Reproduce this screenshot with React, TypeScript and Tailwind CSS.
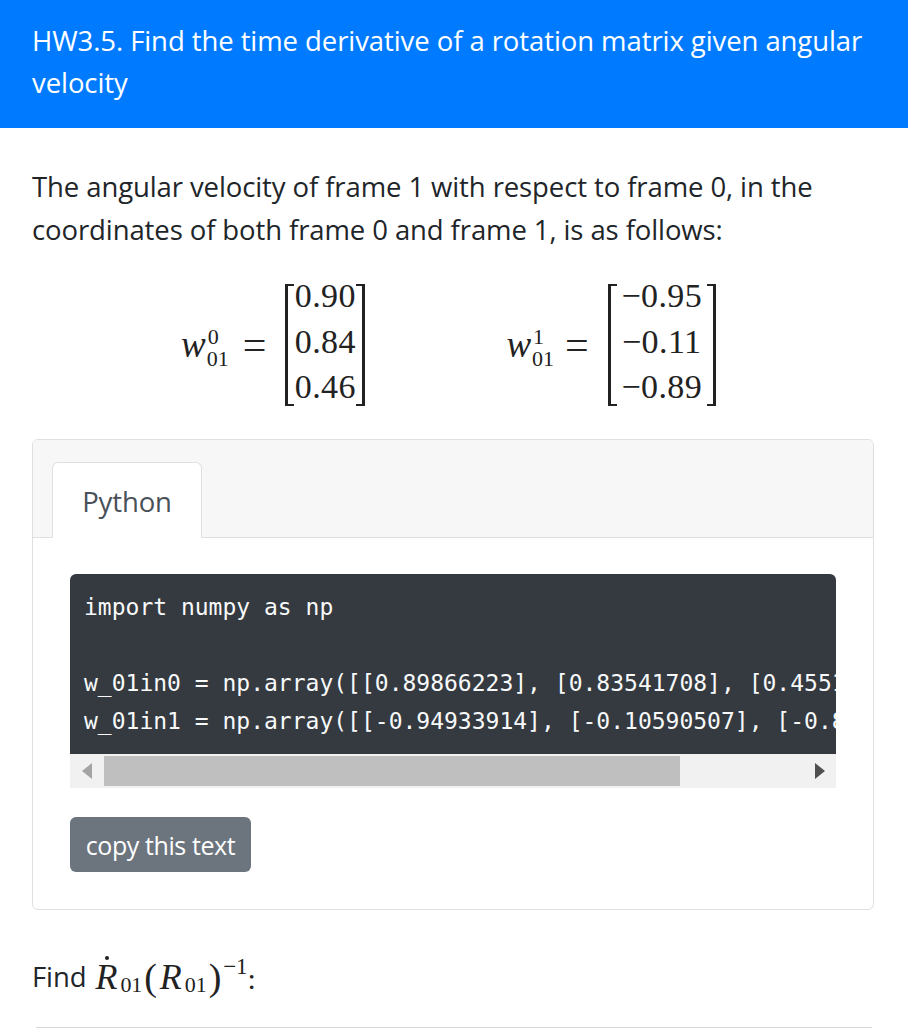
import React from "react";

const serif = "[font-family:'Liberation_Serif','Times_New_Roman',serif]";

function Matrix({ rows, width }: { rows: string[]; width: string }) {
  return (
    <div className={`relative flex flex-col h-[122px] items-center ${width} ${serif} text-[#222] text-[34px] leading-[46px] tracking-[0.4px]`}>
      <span className="absolute left-0 top-0 h-full w-[9px] border-l-[3px] border-y-2 border-[#222]" />
      <span className="absolute right-0 top-0 h-full w-[9px] border-r-[3px] border-y-2 border-[#222]" />
      <div className="flex flex-col mt-[-11px]">
        {rows.map((r) => (
          <span key={r} className="block h-[45.5px] text-center whitespace-nowrap">{r}</span>
        ))}
      </div>
    </div>
  );
}

function Lhs({ sup, gap }: { sup: string; gap: string }) {
  return (
    <div className={`flex items-center ${serif} text-[#222]`}>
      <span className="italic text-[37px] leading-none mt-[-2px] ml-[-1px]">w</span>
      <span className="flex flex-col items-start text-[22px] leading-[22px] ml-[1px] mt-[6px]">
        <span className="ml-[1px]">{sup}</span>
        <span>01</span>
      </span>
      <span className={`text-[42px] leading-none ${gap} mr-[19px]`}>=</span>
    </div>
  );
}

export default function App() {
  return (
    <div className="w-[908px] h-[1028px] overflow-hidden bg-white text-[#212529] font-['Open_Sans',sans-serif]">
      <header className="h-[128px] bg-[#007bff] text-white px-[32px] pt-[20px] text-[27.5px] leading-[42px] tracking-[-0.08px]">
        HW3.5. Find the time derivative of a rotation matrix given angular velocity
      </header>
      <main className="px-[32px] pt-[37px]">
        <p className="text-[27.5px] leading-[43px] tracking-[-0.1px] w-[800px]">
          The angular velocity of frame 1 with respect to frame 0, in the coordinates of both frame 0 and frame 1, is as follows:
        </p>
        <div className="flex items-center mt-[33px] h-[122px] pl-[150px]">
          <Lhs sup="0" gap="ml-[14px]" />
          <Matrix rows={["0.90", "0.84", "0.46"]} width="w-[80px]" />
          <div className="w-[142px]" />
          <Lhs sup="1" gap="ml-[11px]" />
          <Matrix rows={["−0.95", "−0.11", "−0.89"]} width="w-[108px]" />
        </div>
        <section className="mt-[33px] w-[842px] h-[471px] border border-[#dfdfdf] rounded-[6px] overflow-hidden">
          <div className="h-[98px] bg-[#f7f7f7] border-b border-[#dfdfdf] pl-[19px] pt-[22px]">
            <div className="w-[150px] h-[76px] bg-white border border-[#dfdfdf] border-b-white rounded-t-[6px] flex items-center justify-center text-[#495057] text-[27.5px] tracking-[-0.11px] pt-[4px]">
              Python
            </div>
          </div>
          <div className="px-[37px] pt-[36px]">
            <div className="h-[180px] w-[766px] overflow-hidden bg-[#343a40] rounded-t-[6px] text-[#f8f9fa] pl-[14px] pt-[15px] font-['DejaVu_Sans_Mono',monospace] slashed-zero text-[23px] leading-[37.5px] whitespace-pre">
              <div>import numpy as np</div>
              <div>&nbsp;</div>
              <div className="pt-px">w_01in0 = np.array([[0.89866223], [0.83541708], [0.45513]])</div>
              <div>w_01in1 = np.array([[-0.94933914], [-0.10590507], [-0.88912]])</div>
            </div>
            <div className="w-[766px] h-[34px] bg-[#f1f1f1] flex items-center">
              <div className="w-[34px] flex items-center pl-[12px]">
                <span className="w-0 h-0 border-y-[8px] border-y-transparent border-r-[10px] border-r-[#a3a3a3]" />
              </div>
              <div className="w-[576px] h-[30px] bg-[#bfbfbf]" />
              <div className="flex-1 flex justify-end pr-[11px]">
                <span className="w-0 h-0 border-y-[8px] border-y-transparent border-l-[10px] border-l-[#505050]" />
              </div>
            </div>
            <button className="mt-[29px] w-[181px] h-[55px] bg-[#6c757d] text-white rounded-[6px] text-[25px] tracking-[-0.42px] pt-[2px]">
              copy this text
            </button>
          </div>
        </section>
        <div className="mt-[43px] h-[48px] flex items-center text-[27.5px] tracking-[-0.1px]">
          <span>Find</span>
          <span className={`flex items-center ml-[9px] ${serif} text-[36px] text-[#222]`}>
            <span className="relative italic w-[25px]">
              R
              <span className="absolute left-[10px] top-[6px] w-[4px] h-[4px] rounded-full bg-[#222]" />
            </span>
            <span className="text-[22px] mt-[14px]">01</span>
            <span className="text-[38px] leading-none ml-[2px] mr-[3px]">(</span>
            <span className="italic w-[25px]">R</span>
            <span className="text-[22px] mt-[14px]">01</span>
            <span className="text-[38px] leading-none ml-[2px]">)</span>
            <span className="text-[23px] mt-[-20px] ml-[2px]">−1</span>
            <span className="text-[30px] mt-[3px]">:</span>
          </span>
        </div>
        <div className="mt-[26px] ml-[4px] w-[836px] h-[2px] bg-[#d8d8d8]" />
      </main>
    </div>
  );
}
